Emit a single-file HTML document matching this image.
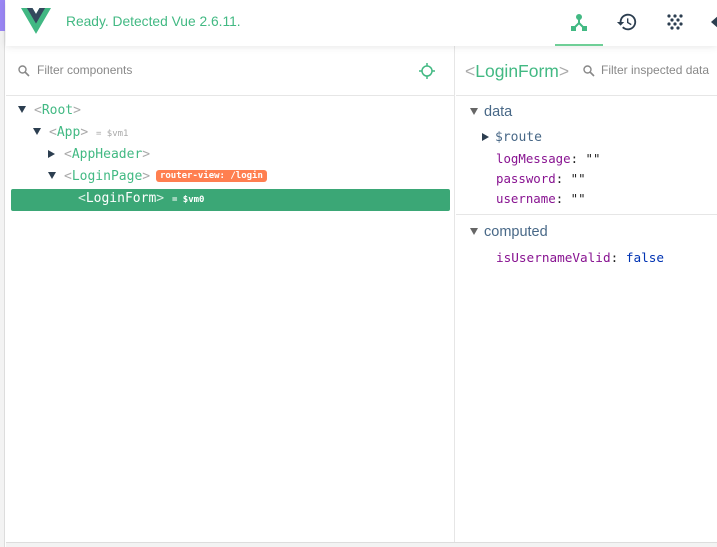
<!DOCTYPE html>
<html><head><meta charset="utf-8"><style>
*{box-sizing:border-box;margin:0;padding:0}
body{width:717px;height:547px;overflow:hidden;background:#fff;font-family:"Liberation Sans",sans-serif;position:relative}
.strip{position:absolute;left:0;top:0;width:5px;height:547px;background:#f3f3f3;border-right:1px solid #ddd}
.strip:before{content:"";position:absolute;left:0;top:0;width:5px;height:31px;background:#9b87f5}
.header{position:absolute;left:6px;top:0;right:0;height:46px;background:#fff;box-shadow:0 0 8px rgba(0,0,0,.12);z-index:2}
.title{position:absolute;left:60px;top:14px;color:#42b983;font-size:13.8px}
.tab{position:absolute;top:0;width:48px;height:46px}
.left{position:absolute;left:6px;top:46px;width:449px;height:496px;border-right:1px solid #e6e6e6}
.search{height:50px;border-bottom:1px solid #e6e6e6;position:relative}
.search span{position:absolute;left:31px;top:17px;font-size:12px;color:#888}
.row{position:absolute;font-size:13px;color:#42b983;font-family:"DejaVu Sans Mono","Liberation Mono",monospace;white-space:nowrap}
.g{color:#aaa}
.tri{display:inline-block;width:0;height:0;border-left:4px solid transparent;border-right:4px solid transparent;border-top:7px solid #2c3e50;margin-right:8px;vertical-align:1px}
.tr{display:inline-block;width:0;height:0;border-top:4px solid transparent;border-bottom:4px solid transparent;border-left:7px solid #2c3e50;margin-right:9px;vertical-align:0}
.vm{font-size:9px;color:#aaa}
.bottom{position:absolute;left:6px;right:0;top:542px;height:5px;background:#f3f3f3;border-top:1px solid #ddd}
.k{color:#881391}
.d{font-size:12.4px;color:#222}
</style></head><body>
<div class="strip"></div>
<div class="header">
<svg style="position:absolute;left:15px;top:8px" width="30" height="26" viewBox="0 0 256 221"><path fill="#41b883" d="M204.8 0H256L128 220.8 0 0h98L128 51.2 157.4 0z"/><path fill="#34495e" d="M50.2 0 128 132.6 205.4 0h-47.8L128 51.2 98 0z"/></svg>
<div class="title">Ready. Detected Vue 2.6.11.</div>
<div class="tab" style="left:549px;border-bottom:2px solid #6fcf97">
<svg style="position:absolute;left:14px;top:12px" width="20" height="20" viewBox="0 0 20 20"><circle cx="10" cy="5" r="3" fill="#42b983"/><rect x="2" y="14" width="5" height="5" fill="#42b983"/><rect x="13" y="14" width="5" height="5" fill="#42b983"/><path d="M10 7v4M10 11l-5 5M10 11l5 5" stroke="#42b983" stroke-width="2" fill="none"/></svg></div>
<svg style="position:absolute;left:610px;top:11px" width="22" height="22" viewBox="0 0 24 24"><path d="M13 3a9 9 0 0 0-9 9H1l4 4 4-4H6a7 7 0 1 1 2.05 4.950l-1.42 1.42A9 9 0 1 0 13 3zm-1 5v5l4.25 2.52.77-1.28-3.52-2.09V8z" fill="#2c3e50"/></svg>
<svg style="position:absolute;left:660px;top:13px" width="18" height="18" viewBox="0 0 18 18" fill="#2c3e50"><circle cx="3" cy="3" r="1.6"/><circle cx="9" cy="3" r="1.6"/><circle cx="15" cy="3" r="1.6"/><circle cx="6" cy="7" r="1.6"/><circle cx="12" cy="7" r="1.6"/><circle cx="3" cy="11" r="1.6"/><circle cx="9" cy="11" r="1.6"/><circle cx="15" cy="11" r="1.6"/><circle cx="6" cy="15" r="1.6"/><circle cx="12" cy="15" r="1.6"/></svg>
<svg style="position:absolute;left:705px;top:15px" width="12" height="14" viewBox="0 0 12 14"><path d="M0 7 8 0v14z" fill="#2c3e50"/></svg>
</div>
<div class="left">
<div class="search">
<svg style="position:absolute;left:12px;top:19px" width="12" height="12" viewBox="0 0 12 12"><circle cx="4.5" cy="4.5" r="3.5" stroke="#888" stroke-width="1.4" fill="none"/><path d="M7 7l4 4" stroke="#888" stroke-width="1.6"/></svg>
<span>Filter components</span>
<svg style="position:absolute;left:413px;top:17px" width="16" height="16" viewBox="0 0 16 16"><circle cx="8" cy="8" r="5" stroke="#42b983" stroke-width="1.5" fill="none"/><path d="M8 0v3M8 13v3M0 8h3M13 8h3" stroke="#42b983" stroke-width="1.5"/></svg>
</div>
<div class="row" style="left:12px;top:57px"><span class="tri"></span><span class="g">&lt;</span>Root<span class="g">&gt;</span></div>
<div class="row" style="left:27px;top:79px"><span class="tri"></span><span class="g">&lt;</span>App<span class="g">&gt;</span> <span class="vm">= $vm1</span></div>
<div class="row" style="left:42px;top:101px"><span class="tr"></span><span class="g">&lt;</span>AppHeader<span class="g">&gt;</span></div>
<div class="row" style="left:42px;top:123px"><span class="tri"></span><span class="g">&lt;</span>LoginPage<span class="g">&gt;</span> <span style="display:inline-block;background:#ff7f50;color:#fff;font-size:9px;font-weight:bold;padding:1px 4px;border-radius:3px;vertical-align:2px;margin-left:-2px">router-view: /login</span></div>
<div style="position:absolute;left:5px;top:143px;width:439px;height:22px;background:#3ba776;border-radius:2px"></div>
<div class="row" style="left:72px;top:145px;color:#fff"><span style="color:#d8f0e4">&lt;</span>LoginForm<span style="color:#d8f0e4">&gt;</span> <span style="font-size:9px;font-weight:bold">= $vm0</span></div>
</div>
<div style="position:absolute;left:456px;top:46px;right:0;height:50px;border-bottom:1px solid #e6e6e6">
<div style="position:absolute;left:9px;top:15px;font-size:17.5px;color:#42b983;white-space:nowrap"><span class="g">&lt;</span>LoginForm<span class="g">&gt;</span></div>
<svg style="position:absolute;left:127px;top:19px" width="12" height="12" viewBox="0 0 12 12"><circle cx="4.5" cy="4.5" r="3.5" stroke="#888" stroke-width="1.4" fill="none"/><path d="M7 7l4 4" stroke="#888" stroke-width="1.6"/></svg>
<span style="position:absolute;left:145px;top:17px;font-size:12px;color:#888;white-space:nowrap">Filter inspected data</span>
</div>
<div style="position:absolute;left:456px;top:97px;right:0;height:118px;border-bottom:1px solid #e6e6e6"></div>
<div style="position:absolute;left:470px;top:104px;font-size:14.5px;color:#486887"><span class="tri" style="border-top-color:#666;margin-right:6px"></span>data</div>
<div class="row" style="left:482px;top:130px;color:#486887;font-size:13px"><span class="tr" style="margin-right:6px"></span>$route</div>
<div class="row d" style="left:496px;top:151px"><span class="k">logMessage</span>: ""</div>
<div class="row d" style="left:496px;top:171px"><span class="k">password</span>: ""</div>
<div class="row d" style="left:496px;top:191px"><span class="k">username</span>: ""</div>
<div style="position:absolute;left:470px;top:224px;font-size:14.5px;color:#486887"><span class="tri" style="border-top-color:#666;margin-right:6px"></span>computed</div>
<div class="row d" style="left:496px;top:250px;font-size:12.7px"><span class="k">isUsernameValid</span>: <span style="color:#0033b3">false</span></div>
<div class="bottom"></div>
</body></html>
